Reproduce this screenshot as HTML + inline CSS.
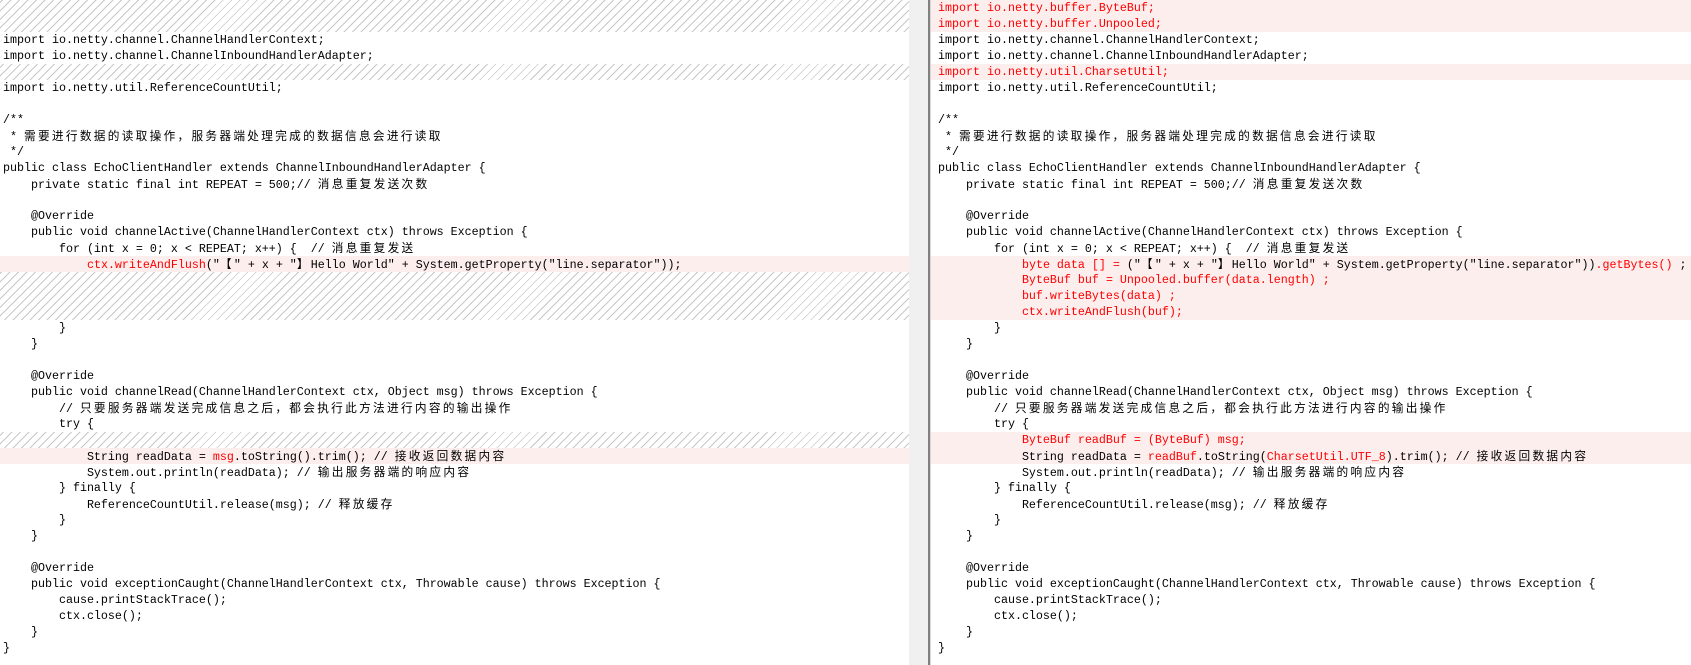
<!DOCTYPE html>
<html><head><meta charset="utf-8"><style>
*{margin:0;padding:0}
body{width:1691px;height:665px;overflow:hidden;background:#fff;font-family:"Liberation Mono","Noto Sans CJK SC",monospace;font-size:11.67px;color:#000}
.pane{position:absolute;top:0;height:665px;background:#fff}
#L{left:0;width:909px}
#G{left:909px;width:19px;background:#f0f0f0;position:absolute;top:0;height:665px}
#D{left:928px;width:2px;background:#808080;position:absolute;top:0;height:665px}
#R{left:930px;width:761px;border-left:1px solid #d8d8d8}
.l{height:16px;line-height:16px;white-space:pre;padding-left:3px}
#R .l{padding-left:7px}
.p{background:#fdeeee}
.h{background:repeating-linear-gradient(-45deg,#fff 0 3px,#c8c8c8 3px 4px,#fff 4px 6px)}
.r{color:#f00}
.c{font-family:"Noto Sans CJK SC",sans-serif;letter-spacing:2.3px}
</style></head><body>
<div class="pane" id="L">
<div class="l h" style="height:32px"></div>
<div class="l">import io.netty.channel.ChannelHandlerContext;</div>
<div class="l">import io.netty.channel.ChannelInboundHandlerAdapter;</div>
<div class="l h"></div>
<div class="l">import io.netty.util.ReferenceCountUtil;</div>
<div class="l"></div>
<div class="l">/**</div>
<div class="l"> * <span class="c">需要进行数据的读取操作，服务器端处理完成的数据信息会进行读取</span></div>
<div class="l"> */</div>
<div class="l">public class EchoClientHandler extends ChannelInboundHandlerAdapter {</div>
<div class="l">    private static final int REPEAT = 500;// <span class="c">消息重复发送次数</span></div>
<div class="l"></div>
<div class="l">    @Override</div>
<div class="l">    public void channelActive(ChannelHandlerContext ctx) throws Exception {</div>
<div class="l">        for (int x = 0; x &lt; REPEAT; x++) {  // <span class="c">消息重复发送</span></div>
<div class="l p">            <span class="r">ctx.writeAndFlush</span>("<span class="c">【</span>" + x + "<span class="c">】</span>Hello World" + System.getProperty("line.separator"));</div>
<div class="l h" style="height:48px"></div>
<div class="l">        }</div>
<div class="l">    }</div>
<div class="l"></div>
<div class="l">    @Override</div>
<div class="l">    public void channelRead(ChannelHandlerContext ctx, Object msg) throws Exception {</div>
<div class="l">        // <span class="c">只要服务器端发送完成信息之后，都会执行此方法进行内容的输出操作</span></div>
<div class="l">        try {</div>
<div class="l h"></div>
<div class="l p">            String readData = <span class="r">msg</span>.toString().trim(); // <span class="c">接收返回数据内容</span></div>
<div class="l">            System.out.println(readData); // <span class="c">输出服务器端的响应内容</span></div>
<div class="l">        } finally {</div>
<div class="l">            ReferenceCountUtil.release(msg); // <span class="c">释放缓存</span></div>
<div class="l">        }</div>
<div class="l">    }</div>
<div class="l"></div>
<div class="l">    @Override</div>
<div class="l">    public void exceptionCaught(ChannelHandlerContext ctx, Throwable cause) throws Exception {</div>
<div class="l">        cause.printStackTrace();</div>
<div class="l">        ctx.close();</div>
<div class="l">    }</div>
<div class="l">}</div>
</div>
<div id="G"></div>
<div id="D"></div>
<div class="pane" id="R">
<div class="l p r">import io.netty.buffer.ByteBuf;</div>
<div class="l p r">import io.netty.buffer.Unpooled;</div>
<div class="l">import io.netty.channel.ChannelHandlerContext;</div>
<div class="l">import io.netty.channel.ChannelInboundHandlerAdapter;</div>
<div class="l p r">import io.netty.util.CharsetUtil;</div>
<div class="l">import io.netty.util.ReferenceCountUtil;</div>
<div class="l"></div>
<div class="l">/**</div>
<div class="l"> * <span class="c">需要进行数据的读取操作，服务器端处理完成的数据信息会进行读取</span></div>
<div class="l"> */</div>
<div class="l">public class EchoClientHandler extends ChannelInboundHandlerAdapter {</div>
<div class="l">    private static final int REPEAT = 500;// <span class="c">消息重复发送次数</span></div>
<div class="l"></div>
<div class="l">    @Override</div>
<div class="l">    public void channelActive(ChannelHandlerContext ctx) throws Exception {</div>
<div class="l">        for (int x = 0; x &lt; REPEAT; x++) {  // <span class="c">消息重复发送</span></div>
<div class="l p">            <span class="r">byte data [] = </span>("<span class="c">【</span>" + x + "<span class="c">】</span>Hello World" + System.getProperty("line.separator"))<span class="r">.getBytes()</span> ;</div>
<div class="l p r">            ByteBuf buf = Unpooled.buffer(data.length) ;</div>
<div class="l p r">            buf.writeBytes(data) ;</div>
<div class="l p r">            ctx.writeAndFlush(buf);</div>
<div class="l">        }</div>
<div class="l">    }</div>
<div class="l"></div>
<div class="l">    @Override</div>
<div class="l">    public void channelRead(ChannelHandlerContext ctx, Object msg) throws Exception {</div>
<div class="l">        // <span class="c">只要服务器端发送完成信息之后，都会执行此方法进行内容的输出操作</span></div>
<div class="l">        try {</div>
<div class="l p r">            ByteBuf readBuf = (ByteBuf) msg;</div>
<div class="l p">            String readData = <span class="r">readBuf</span>.toString(<span class="r">CharsetUtil.UTF_8</span>).trim(); // <span class="c">接收返回数据内容</span></div>
<div class="l">            System.out.println(readData); // <span class="c">输出服务器端的响应内容</span></div>
<div class="l">        } finally {</div>
<div class="l">            ReferenceCountUtil.release(msg); // <span class="c">释放缓存</span></div>
<div class="l">        }</div>
<div class="l">    }</div>
<div class="l"></div>
<div class="l">    @Override</div>
<div class="l">    public void exceptionCaught(ChannelHandlerContext ctx, Throwable cause) throws Exception {</div>
<div class="l">        cause.printStackTrace();</div>
<div class="l">        ctx.close();</div>
<div class="l">    }</div>
<div class="l">}</div>
</div>
</body></html>
